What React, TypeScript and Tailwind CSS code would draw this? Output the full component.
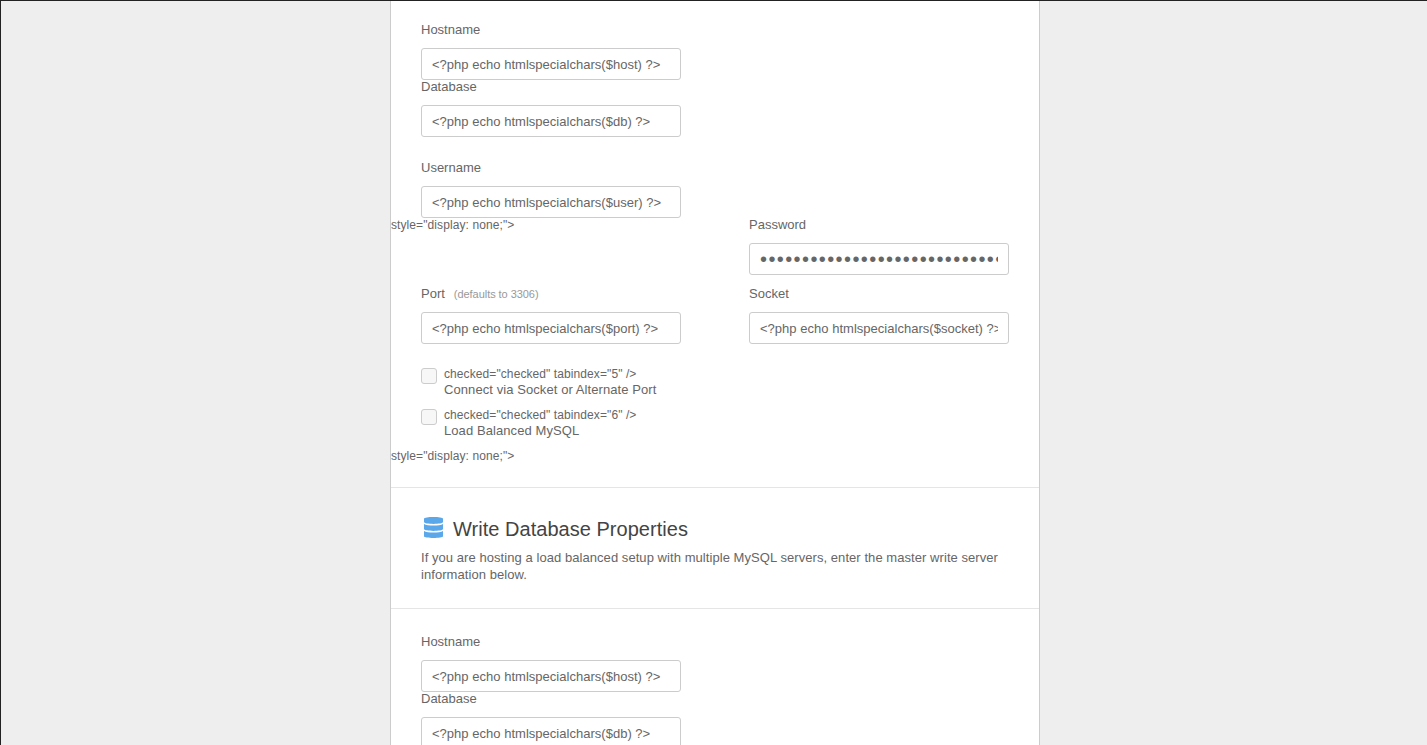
function Field({ label, value, hint, type = "text" }: { label: string; value: string; hint?: string; type?: string }) {
  const pw = type === "password";
  return (
    <div className="w-[260px]">
      <div className="h-[14px] leading-[14px] mb-[11px] text-[13px] text-[#666]">
        {label}
        {hint && <span className="ml-[9px] text-[11px] tracking-[-0.05px] text-[#999]">{hint}</span>}
      </div>
      <input
        readOnly
        type={type}
        value={value}
        className={
          pw
            ? "block w-[260px] h-[32px] px-[10px] bg-white border border-[#ccc] rounded-[3px] text-[20px] tracking-[1.4px] text-[#666] outline-none"
            : "block w-[260px] h-[32px] px-[10px] bg-white border border-[#ccc] rounded-[3px] text-[13px] tracking-[0.02px] text-[#666] outline-none"
        }
      />
    </div>
  );
}

function Check({ attr, label }: { attr: string; label: string }) {
  return (
    <div className="flex">
      <div className="w-[16px] h-[16px] mt-[2px] bg-[#f7f7f7] border border-[#ccc] rounded-[3px]" />
      <div className="ml-[7px] mt-[1px] text-[#666]">
        <div className="text-[12px] leading-[15px] tracking-[0.09px]">{attr}</div>
        <div className="text-[13px] leading-[15px] tracking-[0.08px]">{label}</div>
      </div>
    </div>
  );
}

const Stray = () => <div className="text-[12px] leading-[14px] tracking-[0.09px] text-[#666]">style="display: none;"&gt;</div>;

function DbIcon() {
  return (
    <svg viewBox="0 0 20 21" preserveAspectRatio="none" className="ml-[3px] mb-[3px] w-[19px] h-[21px] text-[#5aa7ea]" fill="currentColor">
      <path d="M10 0C15 0 20 .6 20 1.6V5C20 6.2 15 6.9 10 6.9S0 6.2 0 5V1.6C0 .6 5 0 10 0Z" />
      <path d="M0 6.9C1.8 8 6 8.5 10 8.5s8.2-.5 10-1.6V12C20 13.2 15 13.9 10 13.9S0 13.2 0 12Z" />
      <path d="M0 13.9C1.8 15 6 15.5 10 15.5s8.2-.5 10-1.6V19.3C20 20.4 15 21 10 21S0 20.4 0 19.3Z" />
    </svg>
  );
}

export default function App() {
  return (
    <div className="h-screen overflow-hidden bg-[#eee] border-t border-l border-[#222]" style={{ fontFamily: '"Liberation Sans", Arial, sans-serif' }}>
      <div className="w-[650px] ml-[389px] min-h-[800px] bg-white border-x border-[#ccc]">
        <div className="pt-[22px]">
          <div className="px-[30px] flex flex-col gap-0">
            <Field label="Hostname" value="<?php echo htmlspecialchars($host) ?>" />
            <Field label="Database" value="<?php echo htmlspecialchars($db) ?>" />
            <div className="mt-[24px]">
              <Field label="Username" value="<?php echo htmlspecialchars($user) ?>" />
            </div>
          </div>
          <div className="flex">
            <div className="w-[358px]"><Stray /></div>
            <Field label="Password" type="password" value="<?php echo htmlspecialchars($password) ?>" />
          </div>
          <div className="flex px-[30px] mt-[12px] gap-[68px]">
            <Field label="Port" hint="(defaults to 3306)" value="<?php echo htmlspecialchars($port) ?>" />
            <Field label="Socket" value="<?php echo htmlspecialchars($socket) ?>" />
          </div>
          <div className="px-[30px] mt-[22px] flex flex-col gap-[10px]">
            <Check attr={'checked="checked" tabindex="5" />'} label="Connect via Socket or Alternate Port" />
            <Check attr={'checked="checked" tabindex="6" />'} label="Load Balanced MySQL" />
          </div>
          <div className="mt-[11px] pb-[24px]"><Stray /></div>
        </div>
        <div className="border-t border-[#e5e5e5] px-[30px] pt-[26px] pb-[25px]">
          <div className="flex items-center">
            <DbIcon />
            <h2 className="ml-[10px] text-[20px] leading-[30px] tracking-[0.03px] text-[#444]">Write Database Properties</h2>
          </div>
          <p className="mt-[5px] text-[13px] leading-[17px] tracking-[0.06px] text-[#666]">
            If you are hosting a load balanced setup with multiple MySQL servers, enter the master write server information below.
          </p>
        </div>
        <div className="border-t border-[#e5e5e5] px-[30px] pt-[26px]">
          <Field label="Hostname" value="<?php echo htmlspecialchars($host) ?>" />
          <Field label="Database" value="<?php echo htmlspecialchars($db) ?>" />
        </div>
      </div>
    </div>
  );
}
